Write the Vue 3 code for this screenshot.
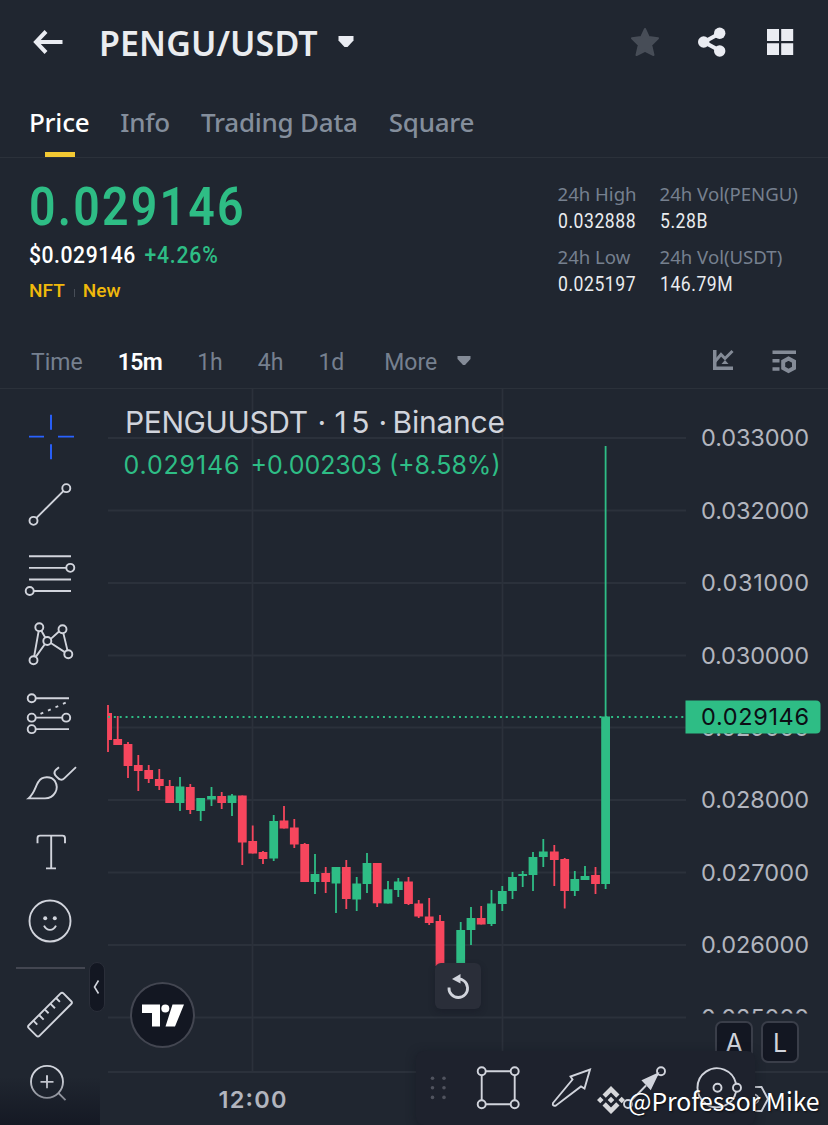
<script setup>
import { ref } from 'vue'

const tabs = ['Price', 'Info', 'Trading Data', 'Square']
const activeTab = ref('Price')

const intervals = ['Time', '15m', '1h', '4h', '1d']
const activeInterval = ref('15m')

const stats = [
  { label: '24h High', value: '0.032888' },
  { label: '24h Vol(PENGU)', value: '5.28B' },
  { label: '24h Low', value: '0.025197' },
  { label: '24h Vol(USDT)', value: '146.79M' },
]

// price scale, y is inside the chart svg
const prices = [
  { y: 49, label: '0.033000' },
  { y: 121.5, label: '0.032000' },
  { y: 194, label: '0.031000' },
  { y: 266.5, label: '0.030000' },
  { y: 338.5, label: '0.029000' },
  { y: 411, label: '0.028000' },
  { y: 483.5, label: '0.027000' },
  { y: 556, label: '0.026000' },
  { y: 628.5, label: '0.025000' },
]

// [x, high, body top, body bottom, low, up]
const candles = [
  [108, 705, 713, 740, 752, 0],
  [117.7, 716, 739, 745, 745, 0],
  [128, 742, 744, 766, 778, 0],
  [138.3, 755, 765, 771, 791, 0],
  [148.7, 765, 770, 779, 783, 0],
  [159.3, 769, 779, 786, 790, 0],
  [169.7, 780, 786, 803, 803, 0],
  [180, 777, 786.5, 803, 811, 1],
  [190.3, 784, 787, 810, 814, 0],
  [200.7, 798, 798, 811, 821, 1],
  [211.5, 787, 796, 799.5, 806, 1],
  [221.7, 792, 796, 803, 809, 0],
  [232, 794, 795.5, 803, 816, 1],
  [242.3, 795.5, 795.5, 842.5, 865, 0],
  [252.7, 825.5, 841, 853.5, 853.5, 0],
  [263, 851, 852, 859, 864, 0],
  [273.7, 815, 821, 858.5, 861, 1],
  [284, 806, 820.5, 828.5, 828.5, 0],
  [294.3, 819, 827.5, 844.5, 848, 0],
  [304.7, 843, 844, 882, 882, 0],
  [315, 854, 874, 882, 894, 1],
  [325.7, 867, 873, 882, 893, 0],
  [336, 867, 867, 883.5, 913, 1],
  [346.3, 860, 867, 899, 909, 0],
  [356.7, 877, 883.5, 899.5, 911, 1],
  [367, 853, 863, 884, 893, 1],
  [377.2, 863, 863, 903.3, 907, 0],
  [388, 881, 889.3, 903.5, 903.5, 1],
  [398.3, 878, 881.5, 890, 897, 1],
  [408.5, 877, 881.5, 904, 905, 0],
  [418.7, 900, 903.5, 916.5, 918, 0],
  [429.2, 898, 916.5, 923, 925, 0],
  [440, 915, 921, 966, 975, 0],
  [450.3, 966, 968, 980, 985, 0],
  [460.7, 922, 930, 975, 980, 1],
  [471, 907, 918, 930, 945, 1],
  [481.2, 906, 918, 924.5, 924.5, 0],
  [491.5, 890, 903.5, 924, 926, 1],
  [502.3, 886, 891, 904, 911, 1],
  [512.5, 872, 877, 891, 899, 1],
  [522.7, 871, 874, 876, 887, 1],
  [533, 852, 857, 875, 891, 1],
  [543.3, 839, 851.5, 857, 867, 1],
  [554.3, 845, 851.5, 860, 886, 0],
  [564.7, 858, 859, 891, 908.5, 0],
  [574.8, 871, 879, 891, 896, 1],
  [585, 866, 876, 880, 880, 1],
  [595.5, 867, 875, 884, 894, 0],
  [605.6, 446, 716.5, 884, 889, 1],
].map(([x, high, top, bottom, low, up]) => ({ x, high, top, bottom, low, up }))
</script>

<template>
  <div class="screen">
    <header>
      <svg class="back" width="30" height="24" viewBox="0 0 30 24">
        <path d="M13 1.5 3 12l10 10.500M3 12h26.500" />
      </svg>
      <h1>PENGU/USDT</h1>
      <svg class="caret" width="16" height="12" viewBox="0 0 16 12">
        <path d="M.5 0h15v4.500L9.500 11h-3L.5 4.500z" />
      </svg>
      <div class="actions">
        <svg width="30" height="30" viewBox="0 0 30 30">
          <path
            class="star"
            d="M15 2l3.700 8 9.300 1.200-6.800 6.800 2.300 10L15 23.800 6.500 28l2.300-10L2 11.200l9.300-1.200z"
          />
        </svg>
        <svg width="30" height="30" viewBox="0 0 30 30">
          <path class="share-line" d="M21.500 6.500 6 15l15.500 8.500" />
          <circle cx="21.700" cy="6.300" r="5.700" />
          <circle cx="5.700" cy="15" r="5.700" />
          <circle cx="21.700" cy="24" r="5.700" />
        </svg>
        <svg width="30" height="30" viewBox="0 0 30 30">
          <path d="M2 2h12v12H2zM16.200 2h12v12h-12zM2 16.300h12v11.700H2zM16.200 16.300h12v11.700h-12z" />
        </svg>
      </div>
    </header>

    <nav class="tabs">
      <a
        v-for="tab in tabs"
        :key="tab"
        :class="{ active: tab === activeTab }"
        @click="activeTab = tab"
        >{{ tab }}</a
      >
    </nav>

    <section class="ticker">
      <div class="price">
        <div class="last">0.029146</div>
        <div class="fiat">$0.029146 <span>+4.26%</span></div>
        <div class="tags"><span>NFT</span><i></i><span>New</span></div>
      </div>
      <div class="stats">
        <div v-for="s in stats" :key="s.label">
          <label>{{ s.label }}</label>
          <b>{{ s.value }}</b>
        </div>
      </div>
    </section>

    <nav class="intervals">
      <a
        v-for="i in intervals"
        :key="i"
        :class="{ active: i === activeInterval }"
        @click="activeInterval = i"
        >{{ i }}</a
      >
      <a class="more">More</a>
      <svg class="small-caret" width="14" height="11" viewBox="0 0 14 11">
        <path d="M.5 0h13v3L8 9H6L.5 3z" />
      </svg>
      <svg class="indicator" width="24" height="24" viewBox="0 0 24 24">
        <path d="M2 2h3.500v16.500H22V22H2z" />
        <path class="line" d="M4 13.500l6-7 4 4 7.500-7.500" />
        <path d="M14 12l3.500 4h-7z" />
      </svg>
      <svg class="settings" width="26" height="26" viewBox="0 0 26 26">
        <path d="M1.500 2.500H25V6H1.500zM1.500 11h7v3.500h-7zM1.500 19.300h7v3.500h-7z" />
        <path class="ring" d="M17.500 10.500l5.500 3v6.500l-5.500 3-5.300-3v-6.500z" />
      </svg>
    </nav>

    <section class="chart">
      <aside class="tools">
        <svg class="cross" viewBox="-50 -34.65 100 69.3">
          <path d="M1-22V-7M1 7.500V22.500M-21 0H-6M8 0H24" />
        </svg>
        <svg viewBox="-50 -34.65 100 69.3">
          <path d="M-13.500 12.200 13.300-14.500" />
          <circle cx="16.300" cy="-17.500" r="4" />
          <circle cx="-16.500" cy="15.200" r="4" />
        </svg>
        <svg viewBox="-50 -34.65 100 69.3">
          <path d="M-21-19.400H21M-21-7.800H16M-21 3.900H21M-16 15.300H21" />
          <circle cx="20.300" cy="-7.800" r="4" />
          <circle cx="-20.300" cy="15.300" r="4" />
        </svg>
        <svg viewBox="-50 -34.65 100 69.3">
          <path
            d="M-11.400-13.300-15.800 11.500M-8.600-13.900-4.800-7.200M-5.200-.4-14.200 12.200M.8-5.800 9-13.200M13.400-11.300 17.400 5.500M.8-1.700 14.800 7.500"
          />
          <circle cx="-10.700" cy="-17.400" r="4" />
          <circle cx="12.500" cy="-15.400" r="4" />
          <circle cx="-2.700" cy="-3.700" r="4" />
          <circle cx="-16.500" cy="15.600" r="4" />
          <circle cx="18.300" cy="9.600" r="4" />
        </svg>
        <svg viewBox="-50 -34.65 100 69.3">
          <path d="M-14-15.400H19M-14 4H12M-14 15.500H19" />
          <path class="dots" d="M-9.500.3 18-12" />
          <circle cx="-18.300" cy="-15.400" r="4" />
          <circle cx="-18.300" cy="4" r="4" />
          <circle cx="16.200" cy="4" r="4" />
          <circle cx="-18.300" cy="15.500" r="4" />
        </svg>
        <svg viewBox="-50 -34.65 100 69.3">
          <path d="M-21.500 15.700C-15 10-15 4-11.500-1-8-6.500 1-7 5-1.500 9.500 6 4.500 15.700-5 15.700z" />
          <path d="M9-15.500 6-13C3.500-10.500 4-8.500 6.500-6 9.500-2.500 12-2 14.500-4.500L26-15.500" />
        </svg>
        <svg viewBox="-50 -34.65 100 69.3">
          <path d="M-12.500-9.500V-14.500Q-12.500-17-10-17H12.500Q15-17 15-14.500V-9.500M1.200-17V15.700M-4 15.700H6" />
        </svg>
        <svg viewBox="-50 -34.65 100 69.3">
          <circle cx="0" cy="-.6" r="20.500" />
          <circle class="dot" cx="-4.800" cy="-3.500" r="2" />
          <circle class="dot" cx="4.800" cy="-3.500" r="2" />
          <path d="M-6 4Q-4 8.200 0 8.200T6 4" />
        </svg>
        <hr />
        <svg viewBox="-50 -34.65 100 69.3">
          <g transform="rotate(-45)">
            <rect x="-24.500" y="-7.500" width="49" height="15" rx="2" />
            <path d="M-16-7.500V-2M-8-7.500V-1M0-7.500V-2M8-7.500V-1M16-7.500V-2" />
          </g>
        </svg>
        <svg viewBox="-50 -34.65 100 69.3">
          <circle cx="-3" cy="-2.800" r="16" />
          <path d="M-9.500-2.800H3.500M-3-9.300V3.700M8.500 8.500 15.500 15.500" />
        </svg>
        <div class="fade"></div>
      </aside>

      <!-- the svg keeps the screen's x, so candles can be placed directly -->
      <svg class="plot" width="728" height="736" viewBox="100 389 728 736">
        <g class="grid">
          <path v-for="p in prices" :key="p.y" :d="`M108 ${p.y + 389}H686`" />
          <path d="M252.500 389V1072M502.500 389V1072M108 1072H828" />
        </g>

        <clipPath id="pane"><path d="M107 389H686V1072H107z" /></clipPath>
        <g clip-path="url(#pane)">
          <g v-for="c in candles" :key="c.x" :class="c.up ? 'up' : 'down'">
            <rect :x="c.x - 0.9" :y="c.high" width="1.8" :height="c.low - c.high" />
            <rect
              :x="Math.max(c.x - 4.4, 107.5)"
              :y="c.top"
              :width="c.x < 110 ? 4.5 : 8.8"
              :height="c.bottom - c.top"
            />
          </g>
        </g>
        <path class="last-line" d="M108 717H686" />

        <clipPath id="scale"><path d="M686 389H828V1013.500H686z" /></clipPath>
        <g class="scale" clip-path="url(#scale)">
          <text v-for="p in prices" :key="p.y" x="701" :y="p.y + 397" textLength="108">
            {{ p.label }}
          </text>
        </g>
        <path class="badge" d="M685.500 700.500H816Q820.500 700.500 820.500 705V729Q820.500 733.500 816 733.500H685.500z" />
        <text class="badge-text" x="701" y="725" textLength="108">0.029146</text>
        <text class="time" x="218.500" y="1107.500" textLength="68">12:00</text>

        <text class="symbol" x="125" y="432.500" textLength="183">PENGUUSDT</text>
        <text class="symbol" x="317.500" y="432.500">·</text>
        <text class="symbol" x="334.500" y="432.500" textLength="35">15</text>
        <text class="symbol" x="378.500" y="432.500">·</text>
        <text class="symbol" x="392.500" y="432.500" textLength="112.500">Binance</text>
        <text class="change" x="123.500" y="474" textLength="116">0.029146</text>
        <text class="change" x="250.500" y="474" textLength="250">+0.002303 (+8.58%)</text>
      </svg>

      <div class="collapse">
        <svg width="8" height="16" viewBox="0 0 8 16"><path d="M5.500 1.500 1.500 8l4 6.500" /></svg>
      </div>

      <div class="tv-logo">
        <svg width="42" height="23" viewBox="0 0 42 23">
          <path d="M0 .5h18V22.500H10V9H0zM30.500.5H42L33 22.500H23.500z" />
          <circle cx="23.300" cy="4.500" r="4" />
        </svg>
      </div>

      <div class="reset">
        <svg width="24" height="26" viewBox="0 0 24 26">
          <path class="arc" d="M3 14.500A9.300 9.300 0 1 0 11 6" />
          <path class="head" d="M6 6 14.500 1v9.500z" />
        </svg>
      </div>

      <div class="modes"><span>A</span><span>L</span></div>

      <svg class="gear" width="26" height="26" viewBox="0 0 26 26">
        <path d="M5 1h11.500l6.500 12-6.500 12H5L-1 13z" />
        <circle cx="9" cy="13" r="4.500" />
      </svg>

      <div class="favorites">
        <svg width="339" height="74" viewBox="416 1051 339 74">
          <g class="grip">
            <circle cx="432.500" cy="1078.300" r="1.800" />
            <circle cx="444" cy="1078.300" r="1.800" />
            <circle cx="432.500" cy="1087.800" r="1.800" />
            <circle cx="444" cy="1087.800" r="1.800" />
            <circle cx="432.500" cy="1097.400" r="1.800" />
            <circle cx="444" cy="1097.400" r="1.800" />
          </g>
          <path d="M486 1071.300h24M486 1104.300h24M481.700 1075.500v24.500M514.700 1075.500v24.500" />
          <circle cx="481.700" cy="1071.300" r="4" />
          <circle cx="514.700" cy="1071.300" r="4" />
          <circle cx="481.700" cy="1104.300" r="4" />
          <circle cx="514.700" cy="1104.300" r="4" />
          <path
            d="M553 1103 572.500 1079.500 570.500 1076.500 590 1069.500 584.500 1088.500 581 1086.500 556 1105.500Q552 1106.500 553 1103z"
          />
          <path d="M631 1101 646 1085.500M655 1076.500 658 1074.500" />
          <path class="solid" d="M643 1080.500 657.500 1074 650.500 1088.500z" />
          <circle cx="661" cy="1071.300" r="4" />
          <circle cx="628" cy="1104" r="4" />
          <path d="M736 1083.500A19.500 19.500 0 1 0 736 1092" />
          <circle cx="717.500" cy="1087.800" r="4" />
          <circle cx="737" cy="1087.800" r="4" />
        </svg>
      </div>

      <div class="watermark">
        <svg width="28" height="28" viewBox="0 0 28 28">
          <path
            d="M14 0l8.500 8.500-3.300 3.300L14 6.600l-5.200 5.200-3.300-3.300zM3.300 10.700 6.600 14l-3.300 3.300L0 14zM14 10.700l3.300 3.300-3.300 3.300-3.300-3.300zM24.700 10.700 28 14l-3.300 3.300-3.300-3.300zM14 28l-8.500-8.500 3.300-3.300 5.200 5.200 5.200-5.200 3.300 3.300z"
          />
        </svg>
        <span>@Professor Mike</span>
      </div>
    </section>
  </div>
</template>

<style>
body {
  background: #202630;
}
</style>

<style scoped>
.screen {
  display: flex;
  flex-direction: column;
  width: 828px;
  height: 1125px;
  overflow: hidden;
  background: #202630;
  color: #eaecef;
  font-family: 'Noto Sans', sans-serif;
}
svg {
  display: block;
  flex-shrink: 0;
}

header {
  display: flex;
  align-items: center;
  height: 83px;
  padding: 0 33px 2px;
  fill: #eaecf2;
}
.back {
  fill: none;
  stroke: #eaecf2;
  stroke-width: 4;
}
h1 {
  margin: 0 20px 0 36px;
  padding-top: 2px;
  width: 219px;
  font-size: 34px;
  font-weight: 600;
  line-height: 44px;
  letter-spacing: 0.1px;
  white-space: nowrap;
}
.actions {
  display: flex;
  gap: 37.5px;
  margin-left: auto;
}
.star {
  fill: #474d57;
  stroke: #474d57;
  stroke-width: 2;
  stroke-linejoin: round;
}
.share-line {
  fill: none;
  stroke: #eaecf2;
  stroke-width: 4;
}

.tabs {
  display: flex;
  gap: 31px;
  height: 72px;
  padding: 0 29px;
  border-bottom: 1px solid #2b313a;
  font-size: 26px;
  font-weight: 500;
  line-height: 74px;
  letter-spacing: -0.25px;
  color: #848e9c;
}
.tabs a {
  position: relative;
}
.tabs .active {
  color: #fff;
}
.tabs .active::after {
  content: '';
  position: absolute;
  left: 16px;
  bottom: 0;
  width: 30px;
  height: 5px;
  background: #f3c933;
}

.ticker {
  display: flex;
  justify-content: space-between;
  height: 177px;
  padding: 0 29.5px 0 29px;
  box-sizing: border-box;
  font-family: Roboto, sans-serif;
}
/* Roboto is squeezed to get condensed digits */
.last,
.fiat,
.stats b {
  transform-origin: left;
  white-space: nowrap;
}
.last {
  margin-top: 19px;
  font-size: 54px;
  font-weight: 600;
  line-height: 60px;
  letter-spacing: 2.6px;
  color: #2ebd85;
  transform: scaleX(0.86);
}
.fiat {
  margin-top: 4px;
  font-size: 23.5px;
  font-weight: 500;
  line-height: 28px;
  letter-spacing: 0.6px;
  color: #fff;
  transform: scaleX(0.9);
}
.fiat span {
  margin-left: 3px;
  letter-spacing: 0.9px;
  color: #2ebd85;
}
.tags {
  display: flex;
  align-items: center;
  margin-top: 9px;
  font-size: 19px;
  font-weight: 500;
  line-height: 26px;
  color: #f0b90b;
}
.tags i {
  width: 1px;
  height: 8px;
  margin: 4px 8px 0 9px;
  background: #474d57;
}
.stats {
  display: grid;
  grid-template-columns: 102px 139px;
  align-content: start;
  row-gap: 9.5px;
  margin-top: 22.5px;
}
.stats label,
.stats b {
  display: block;
  font-size: 18.6px;
  font-weight: 400;
  line-height: 26px;
  white-space: nowrap;
}
.stats label {
  color: #76808f;
  font-family: 'Noto Sans', sans-serif;
}
.stats b {
  color: #eaecef;
  font-size: 20px;
  line-height: 28px;
  letter-spacing: 0.6px;
  transform: scaleX(0.88);
}

.intervals {
  display: flex;
  align-items: center;
  height: 53px;
  padding: 0 31px;
  border-bottom: 1px solid #2b313a;
  font-family: Roboto, sans-serif;
  font-size: 23px;
  color: #76808f;
  fill: #848b97;
}
.intervals a {
  margin-right: 35px;
  padding-top: 1px;
}
.intervals .active {
  color: #fff;
  font-weight: 600;
  letter-spacing: -0.6px;
}
.intervals .more {
  margin: 0 20px 0 5px;
}
.indicator {
  margin: 0 0 3px auto;
}
.indicator .line {
  fill: none;
  stroke: #848b97;
  stroke-width: 3;
}
.settings {
  margin: 0 0 2px 36px;
}
.ring {
  fill: none;
  stroke: #848b97;
  stroke-width: 4;
}

.chart {
  position: relative;
  display: flex;
  flex: 1;
}
.tools {
  position: relative;
  width: 100px;
  padding-top: 13px;
  overflow: hidden;
}
.tools svg {
  width: 100px;
  height: 69.3px;
  fill: none;
  stroke: #d1d4dc;
  stroke-width: 1.9;
}
.tools .cross {
  stroke: #2962ff;
}
.tools .dots {
  stroke-dasharray: 3 5.2;
}
.tools .dot {
  fill: #d1d4dc;
  stroke: none;
}
.tools hr {
  height: 2px;
  margin: 11px 15px 11px 16px;
  border: 0;
  background: #434651;
}
.fade {
  position: absolute;
  left: 0;
  bottom: 0;
  width: 100%;
  height: 48px;
  background: linear-gradient(#13172200, #131722dd);
}

.plot {
  font-family: Inter, sans-serif;
}
.grid path {
  stroke: #2b313b;
  stroke-width: 1.8;
}
.up {
  fill: #2ebd85;
}
.down {
  fill: #f6465d;
}
.last-line {
  stroke: #2ebd85;
  stroke-width: 2;
  stroke-dasharray: 2 3.85;
}
.scale {
  font-size: 23.5px;
  fill: #b2b5be;
}
.badge {
  fill: #2ebd85;
}
.badge-text {
  font-size: 23.5px;
  fill: #0c0e15;
}
.time {
  font-size: 23.5px;
  font-weight: 600;
  fill: #b2b5be;
}
.symbol {
  font-size: 30px;
  fill: #d1d4dc;
}
.change {
  font-size: 25px;
  fill: #2ebd85;
}

.collapse {
  position: absolute;
  left: 89px;
  top: 573px;
  display: flex;
  align-items: center;
  justify-content: center;
  width: 14px;
  height: 48px;
  border: 1.5px solid #2a2e39;
  border-radius: 8px;
  background: #131722;
  fill: none;
  stroke: #d1d4dc;
  stroke-width: 1.6;
}
.tv-logo {
  position: absolute;
  left: 130px;
  top: 593px;
  display: flex;
  align-items: center;
  justify-content: center;
  width: 61px;
  height: 61px;
  padding-top: 1px;
  border: 2px solid #434651;
  border-radius: 50%;
  background: #131722;
  fill: #fff;
}
.reset {
  position: absolute;
  left: 435px;
  top: 574px;
  display: flex;
  align-items: center;
  justify-content: center;
  width: 46px;
  height: 46px;
  border-radius: 6px;
  background: #2a2e39;
  box-shadow: 0 3px 6px #13172266;
}
.arc {
  fill: none;
  stroke: #d1d4dc;
  stroke-width: 2.8;
}
.head {
  fill: #d1d4dc;
}
.modes {
  position: absolute;
  left: 715px;
  top: 632px;
  display: flex;
  gap: 8px;
}
.modes span {
  width: 34px;
  height: 38px;
  border: 2px solid #3a3e49;
  border-radius: 7px;
  background: #131722;
  font: 25px/41px Inter, sans-serif;
  text-align: center;
  color: #d1d4dc;
}
.gear {
  position: absolute;
  left: 745px;
  top: 697px;
  fill: none;
  stroke: #d1d4dc;
  stroke-width: 1.9;
}
.favorites {
  position: absolute;
  left: 416px;
  top: 662px;
  height: 74px;
  border-radius: 8px;
  background: #1e222d;
  box-shadow: 0 2px 10px #13172299;
  fill: none;
  stroke: #d1d4dc;
  stroke-width: 1.9;
}
.grip {
  fill: #50535e;
  stroke: none;
}
.solid {
  fill: #d1d4dc;
}
.watermark {
  position: absolute;
  left: 597px;
  top: 693px;
  display: flex;
  align-items: center;
  gap: 3px;
  height: 36px;
  color: #fff;
  fill: #d6d7da;
  font-family: 'Noto Sans CJK SC', sans-serif;
  font-size: 24.8px;
  line-height: 34px;
  letter-spacing: -0.06px;
  white-space: nowrap;
  text-shadow: 1px 1px 2px #000a;
}
</style>
